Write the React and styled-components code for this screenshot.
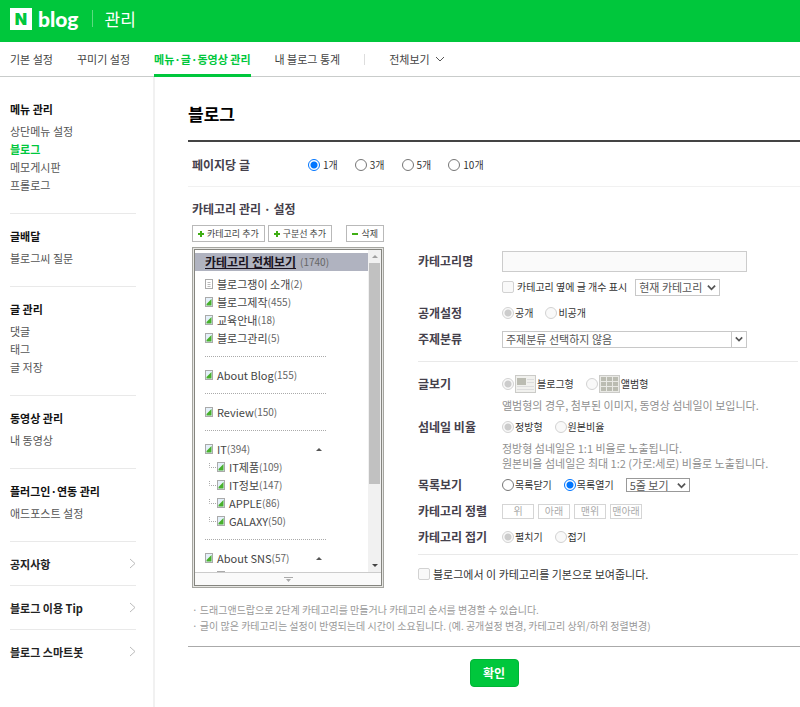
import { useState } from 'react'
import styled, { createGlobalStyle, css } from 'styled-components'

const root = {
    green: "#00c73c",
    ink: "#333",
    label: "#45404b",
    hint: "#8f8f8f",
    line: "#e9e9e9",
    fontSmall: "10px",
    font: "11px",
    fontBig: "12px",
    fontTitle: "17px"
}

const GlobalStyle = createGlobalStyle`
    * { box-sizing: border-box; }
    body {
        margin: 0;
        background: #fff;
        color: ${root.ink};
        font: ${root.font}/18px "Noto Sans CJK KR", sans-serif;
    }
    h1, h2, h3, ul, p, fieldset { margin: 0; padding: 0; border: 0; min-width: 0; }
    ul { list-style: none; }
    a { color: inherit; text-decoration: none; }
    button, input, select { margin: 0; font-family: inherit; color: inherit; }
    svg { display: block; flex: none; }
`

/* header */

const Header = styled.header`
    display: flex;
    align-items: center;
    height: 42px;
    padding: 0 10px 5px;
    background: ${root.green};
    color: #fff;
`

const Logo = styled.a`
    display: flex;
    align-items: center;
    gap: 6px;
`

const LogoMark = styled.span`
    width: 22px;
    height: 22px;
    background: #fff;
    color: ${root.green};
    font: 900 16px/22px Inter, sans-serif;
    text-align: center;
`

const LogoText = styled.span`
    font: 900 21px/22px Lato, sans-serif;
`

const HeaderTitle = styled.span`
    margin-left: 13px;
    padding-left: 12px;
    border-left: 1px solid #5bdb80;
    font-size: ${root.fontTitle};
    line-height: 17px;
`

const Nav = styled.nav`
    display: flex;
    gap: 24px;
    height: 35px;
    padding: 0 10px;
    border-bottom: 1px solid #c9cccb;
`

const NavLink = styled.a`
    display: flex;
    align-items: center;
    gap: 5px;
    height: 35px;
    padding-bottom: 2px;
    white-space: nowrap;
    color: #444;
    ${p => p.$active && css`
        color: ${root.green};
        font-weight: 700;
        box-shadow: inset 0 -3px ${root.green};
    `}
`

const NavBar = styled.span`
    align-self: center;
    width: 1px;
    height: 11px;
    background: #ddd;
`

/* side menu */

const Page = styled.div`
    display: grid;
    grid-template-columns: 155px 1fr;
`

const Side = styled.aside`
    min-height: calc(100vh - 77px);
    padding: 10px 17px 0 10px;
    border-right: 2px solid #f1f1f1;
`

const SideGroup = styled.section`
    padding: 11px 0 19px;
    & + & { border-top: 1px solid ${root.line}; }
`

const SideTitle = styled.h2`
    margin-bottom: 2px;
    font-size: ${root.font};
    line-height: 22px;
    color: #111;
`

const SideLink = styled.a`
    display: block;
    color: ${p => p.$active ? root.green : "#555"};
    font-weight: ${p => p.$active ? 700 : 400};
`

const SideMore = styled.a`
    display: flex;
    align-items: center;
    justify-content: space-between;
    height: 44px;
    border-top: 1px solid ${root.line};
    font-weight: 700;
    color: #222;
`

/* main */

const Main = styled.main`
    padding: 24px 0 20px 33px;
`

const Title = styled.h1`
    padding: 0 0 13px;
    border-bottom: 2px solid #444;
    font-size: ${root.fontTitle};
    line-height: 26px;
    color: #000;
`

const PerPage = styled.fieldset`
    display: flex;
    align-items: center;
    gap: 17px;
    height: 45px;
    padding: 2px 0 0 4px;
    border-bottom: 1px solid #f1f1f1;
`

const Label = styled.span`
    font-size: ${root.fontBig};
    font-weight: 700;
    line-height: 24px;
    color: ${root.label};
`

const PerPageLabel = styled(Label)`
    width: 99px;
`

const Choice = styled.label`
    display: flex;
    align-items: center;
    gap: ${p => p.$loose ? "3px" : "1px"};
    font-size: ${root.fontSmall};
    white-space: nowrap;
`

const Radio = styled.input.attrs({ type: "radio" })`
    appearance: none;
    width: 12px;
    height: 12px;
    border: 1px solid #767676;
    border-radius: 50%;
    background: #fff;
    &:checked {
        border-color: #0075ff;
        background: radial-gradient(circle, #0075ff 3px, #fff 4px);
    }
    &:disabled { border-color: #d2d2d2; background: #f9f9f9; }
    &:disabled:checked { background: radial-gradient(circle, #ccc 3px, #f9f9f9 4px); }
`

const Check = styled.input.attrs({ type: "checkbox" })`
    appearance: none;
    width: 12px;
    height: 12px;
    border: 1px solid #d2d2d2;
    border-radius: 2px;
    background: #f9f9f9;
`

const Columns = styled.div`
    display: grid;
    grid-template-columns: 192px 1fr;
    gap: 34px;
    padding: 10px 2px 0 4px;
`

const Tools = styled.div`
    display: flex;
    gap: 3px;
    margin: 4px 0 5px;
    button:last-child { margin-left: auto; }
`

const ToolButton = styled.button`
    display: flex;
    align-items: center;
    gap: 3px;
    height: 17px;
    padding: 0 5px;
    border: 1px solid #b9b9b9;
    background: #fff;
    color: #444;
    font-size: 9px;
    line-height: 15px;
    white-space: nowrap;
`

const TreeBox = styled.div`
    padding: 1px;
    border: 1px solid #a5a5a0;
    background: #e6e6e3;
`

const TreeInner = styled.div`
    border: 1px solid #85857f;
    background: #fff;
`

const TreeView = styled.div`
    display: grid;
    grid-template-columns: 1fr 13px;
    height: 322px;
`

const TreeList = styled.div`
    padding-top: 3px;
    overflow: hidden;
`

const TreeHead = styled.div`
    display: flex;
    align-items: center;
    gap: 4px;
    height: 18px;
    margin-bottom: 4px;
    padding-left: 10px;
    background: #b0b3c0;
    font-size: ${root.fontBig};
    strong { color: #1a1320; text-decoration: underline; }
`

const Count = styled.span`
    color: #666;
    font-size: ${root.fontSmall};
`

const TreeRow = styled.li`
    display: flex;
    align-items: center;
    width: 130px;
    height: 18px;
    padding-left: ${p => p.$child ? "14px" : "10px"};
    color: #444;
    white-space: nowrap;
    > svg:first-child { margin-right: ${p => p.$child ? "1px" : "4px"}; }
    > svg + svg { margin-right: 4px; }
`

const TreeToggle = styled.button`
    margin-left: auto;
    padding: 3px;
    border: 0;
    background: none;
`

const TreeLine = styled.li`
    display: flex;
    align-items: center;
    height: 19px;
    margin-left: 10px;
    &::after {
        content: "";
        width: 121px;
        border-top: 1px dotted #aaa;
    }
`

const ScrollBar = styled.div`
    display: flex;
    flex-direction: column;
    align-items: center;
    justify-content: space-between;
    padding: 5px 0;
    background: #f1f1f1;
`

const ScrollThumb = styled.div`
    width: 11px;
    height: 221px;
    margin: 5px 0 auto;
    background: #c1c1c1;
`

const TreeFoot = styled.button`
    display: flex;
    align-items: center;
    justify-content: center;
    width: 100%;
    height: 13px;
    padding: 0;
    border: 0;
    border-top: 1px solid #ccc;
    background: #fafafa;
`

/* form */

const Form = styled.div`
    padding-top: 52px;
`

const Section = styled.div`
    display: grid;
    gap: 2px;
    padding: ${p => p.$first ? "0 0 10px" : "10px 0 5px"};
    border-bottom: 1px solid ${root.line};
`

const Row = styled.div`
    display: grid;
    grid-template-columns: 84px 1fr;
`

const Field = styled.div`
    display: grid;
    gap: 2px;
`

const Line = styled.div`
    display: flex;
    align-items: center;
    gap: ${p => p.$gap || "12px"};
    height: 24px;
`

const Hint = styled.p`
    color: ${root.hint};
    line-height: 15px;
`

const NameInput = styled.input`
    width: 245px;
    height: 21px;
    border: 1px solid #ccc;
    background: #fafafa;
`

const SelectWrap = styled.span`
    display: grid;
    grid-template-columns: 1fr 15px;
    align-items: center;
    width: ${p => p.$width};
    height: ${p => p.$slim ? "14px" : "17px"};
    border: 1px solid ${p => p.$dark ? "#999" : "#c8c8c8"};
    background: #fff;
    color: #555;
    select {
        grid-area: 1 / 1 / 2 / 3;
        appearance: none;
        width: 100%;
        height: 100%;
        padding: 0 3px;
        border: 0;
        background: none;
        font-size: ${root.font};
        line-height: 12px;
        opacity: 1;
    }
`

const SelectMark = styled.span`
    grid-area: 1 / 2;
    display: grid;
    place-items: center;
    height: 100%;
    pointer-events: none;
    border-left: ${p => p.$split ? "1px solid #c8c8c8" : "0"};
`

const OrderButton = styled.button`
    width: 32px;
    height: 15px;
    padding: 0;
    border: 1px solid #d5d5d5;
    background: #fff;
    font-size: ${root.fontSmall};
    line-height: 12px;
    &:disabled { color: #aaa; }
`

const Default = styled.label`
    display: flex;
    align-items: center;
    gap: 3px;
    height: 38px;
`

const Notes = styled.ul`
    padding: 9px 4px 12px;
    border-bottom: 1px solid #aaa;
    color: #999;
    font-size: ${root.fontSmall};
    line-height: 16px;
`

const Submit = styled.button`
    display: block;
    width: 49px;
    height: 28px;
    margin: 12px auto 0;
    padding: 0;
    border: 1px solid #00b436;
    border-radius: 4px;
    background: ${root.green};
    color: #fff;
    font-size: ${root.fontBig};
    font-weight: 700;
    line-height: 26px;
`

/* icons */

const ChevronDown = ({ size = 10, color = "#555", weight = 1 }) =>
    <svg width={size} height={size} viewBox="0 0 10 10" fill="none" stroke={color} strokeWidth={weight}>
        <path d="M1 3l4 4 4-4" />
    </svg>

const ChevronRight = () =>
    <svg width="7" height="11" viewBox="0 0 7 11" fill="none" stroke="#bbb">
        <path d="M1 1l5 4.5L1 10" />
    </svg>

const Sign = ({ minus }) =>
    <svg width="6" height="6" viewBox="0 0 6 6" stroke="#3fae14" strokeWidth="2">
        <path d={minus ? "M0 3h6" : "M0 3h6M3 0v6"} />
    </svg>

const Triangle = ({ up, color = "#555" }) =>
    <svg width="6" height="3" viewBox="0 0 6 3" fill={color}>
        <path d={up ? "M0 3l3-3 3 3z" : "M0 0l3 3 3-3z"} />
    </svg>

const Expand = () =>
    <svg width="9" height="5" viewBox="0 0 9 5" fill="#aaa">
        <path d="M0 0h9v1H0zM2 2h5L4.500 5z" />
    </svg>

const FileIcon = ({ text }) =>
    <svg width="8" height="10" viewBox="0 0 8 10">
        <rect x=".5" y=".5" width="7" height="9" fill={text ? "#fff" : "#e4f0fa"} stroke="#aaa" />
        {text
            ? <path d="M2.500 3.500h3M2.500 5.500h3M2.500 7.500h3" stroke="#bbb" />
            : <path d="M1.500 8.500V7l5-5v6.500z" fill="#48b02c" />}
    </svg>

const Branch = () =>
    <svg width="7" height="8" viewBox="0 0 7 8" fill="none" stroke="#aaa" strokeDasharray="1 1">
        <path d="M.5 0v4.500H7" />
    </svg>

const BlogView = () =>
    <svg width="21" height="18" viewBox="0 0 21 18">
        <rect x=".5" y=".5" width="20" height="17" fill="#f1f1ee" stroke="#cbcbc8" />
        <path d="M12 4.500h7M12 7.500h7M2 11.500h17M2 14.500h17" stroke="#ddd" />
        <path d="M2 3h9v7H2z" fill="#bbbcb2" />
    </svg>

const AlbumView = () =>
    <svg width="21" height="18" viewBox="0 0 21 18">
        <rect x=".5" y=".5" width="20" height="17" fill="#e9e9e5" stroke="#cbcbc8" />
        <path d="M2 2h5v4H2zM8 2h5v4H8zM14 2h5v4h-5zM2 7h5v4H2zM8 7h5v4H8zM14 7h5v4h-5zM2 12h5v4H2zM8 12h5v4H8zM14 12h5v4h-5z" fill="#bbbcb2" />
    </svg>

const sideGroups = [
    { title: "메뉴 관리", links: ["상단메뉴 설정", "블로그", "메모게시판", "프롤로그"] },
    { title: "글배달", links: ["블로그씨 질문"] },
    { title: "글 관리", links: ["댓글", "태그", "글 저장"] },
    { title: "동영상 관리", links: ["내 동영상"] },
    { title: "플러그인·연동 관리", links: ["애드포스트 설정"] }
]

const sideMore = ["공지사항", "블로그 이용 Tip", "블로그 스마트봇"]

const tree = [
    { name: "블로그쟁이 소개", count: 2, text: true },
    { name: "블로그제작", count: 455 },
    { name: "교육안내", count: 18 },
    { name: "블로그관리", count: 5 },
    null,
    { name: "About Blog", count: 155 },
    null,
    { name: "Review", count: 150 },
    null,
    { name: "IT", count: 394, open: true },
    { name: "IT제품", count: 109, child: true },
    { name: "IT정보", count: 147, child: true },
    { name: "APPLE", count: 86, child: true },
    { name: "GALAXY", count: 50, child: true },
    null,
    { name: "About SNS", count: 57, open: true },
    { child: true }
]

function Select({ label, value, split, disabled, ...rest }) {
    return <SelectWrap {...rest}>
        <select aria-label={label} disabled={disabled}><option>{value}</option></select>
        <SelectMark $split={split}><ChevronDown size={split ? 8 : 9} weight={2} /></SelectMark>
    </SelectWrap>
}

function CategoryTree() {
    return <TreeBox>
        <TreeInner>
            <TreeView>
                <TreeList>
                    <TreeHead><strong>카테고리 전체보기</strong><Count>(1740)</Count></TreeHead>
                    <ul>
                        {tree.map((item, i) => item
                            ? <TreeRow key={i} $child={item.child}>
                                {item.child && <Branch />}
                                <FileIcon text={item.text} />
                                {item.name}
                                {item.count && <Count>({item.count})</Count>}
                                {item.open && <TreeToggle aria-label="접기"><Triangle up /></TreeToggle>}
                            </TreeRow>
                            : <TreeLine key={i} />)}
                    </ul>
                </TreeList>
                <ScrollBar>
                    <Triangle up color="#a0a0a0" />
                    <ScrollThumb />
                    <Triangle color="#444" />
                </ScrollBar>
            </TreeView>
            <TreeFoot aria-label="목록 늘리기"><Expand /></TreeFoot>
        </TreeInner>
    </TreeBox>
}

function Settings() {
    const [list, setList] = useState("open")

    return <Form>
        <Section $first>
            <Row>
                <Label as="label" htmlFor="name">카테고리명</Label>
                <Field>
                    <Line><NameInput id="name" disabled /></Line>
                    <Line $gap="8px">
                        <Choice $loose><Check disabled />카테고리 옆에 글 개수 표시</Choice>
                        <Select label="글 개수" value="현재 카테고리" $width="85px" disabled />
                    </Line>
                </Field>
            </Row>
            <Row>
                <Label>공개설정</Label>
                <Line>
                    <Choice><Radio name="public" defaultChecked disabled />공개</Choice>
                    <Choice><Radio name="public" disabled />비공개</Choice>
                </Line>
            </Row>
            <Row>
                <Label>주제분류</Label>
                <Line><Select label="주제분류" value="주제분류 선택하지 않음" $width="245px" split disabled /></Line>
            </Row>
        </Section>
        <Section>
            <Row>
                <Label>글보기</Label>
                <Field>
                    <Line>
                        <Choice><Radio name="view" defaultChecked disabled /><BlogView />블로그형</Choice>
                        <Choice><Radio name="view" disabled /><AlbumView />앨범형</Choice>
                    </Line>
                    <Hint>앨범형의 경우, 첨부된 이미지, 동영상 섬네일이 보입니다.</Hint>
                </Field>
            </Row>
            <Row>
                <Label>섬네일 비율</Label>
                <Field>
                    <Line>
                        <Choice><Radio name="ratio" defaultChecked disabled />정방형</Choice>
                        <Choice><Radio name="ratio" disabled />원본비율</Choice>
                    </Line>
                    <Hint>정방형 섬네일은 1:1 비율로 노출됩니다.<br />원본비율 섬네일은 최대 1:2 (가로:세로) 비율로 노출됩니다.</Hint>
                </Field>
            </Row>
            <Row>
                <Label>목록보기</Label>
                <Line>
                    <Choice><Radio name="list" checked={list === "close"} onChange={() => { setList("close") }} />목록닫기</Choice>
                    <Choice><Radio name="list" checked={list === "open"} onChange={() => { setList("open") }} />목록열기</Choice>
                    <Select label="줄 수" value="5줄 보기" $width="64px" $slim $dark />
                </Line>
            </Row>
            <Row>
                <Label>카테고리 정렬</Label>
                <Line $gap="4px">
                    {["위", "아래", "맨위", "맨아래"].map(name => <OrderButton key={name} disabled>{name}</OrderButton>)}
                </Line>
            </Row>
            <Row>
                <Label>카테고리 접기</Label>
                <Line>
                    <Choice><Radio name="fold" defaultChecked disabled />펼치기</Choice>
                    <Choice><Radio name="fold" disabled />접기</Choice>
                </Line>
            </Row>
        </Section>
        <Default><Check disabled />블로그에서 이 카테고리를 기본으로 보여줍니다.</Default>
    </Form>
}

export default function App() {
    const [perPage, setPerPage] = useState(1)

    return <>
        <GlobalStyle />
        <Header>
            <Logo href="#"><LogoMark>N</LogoMark><LogoText>blog</LogoText></Logo>
            <HeaderTitle>관리</HeaderTitle>
        </Header>
        <Nav>
            <NavLink href="#">기본 설정</NavLink>
            <NavLink href="#">꾸미기 설정</NavLink>
            <NavLink href="#" $active>메뉴·글·동영상 관리</NavLink>
            <NavLink href="#">내 블로그 통계</NavLink>
            <NavBar />
            <NavLink href="#">전체보기<ChevronDown /></NavLink>
        </Nav>
        <Page>
            <Side>
                {sideGroups.map(group => <SideGroup key={group.title}>
                    <SideTitle>{group.title}</SideTitle>
                    <ul>
                        {group.links.map(link => <li key={link}><SideLink href="#" $active={link === "블로그"}>{link}</SideLink></li>)}
                    </ul>
                </SideGroup>)}
                {sideMore.map(link => <SideMore key={link} href="#">{link}<ChevronRight /></SideMore>)}
            </Side>
            <Main>
                <Title>블로그</Title>
                <PerPage>
                    <PerPageLabel>페이지당 글</PerPageLabel>
                    {[1, 3, 5, 10].map(n => <Choice key={n} $loose>
                        <Radio name="perPage" checked={perPage === n} onChange={() => { setPerPage(n) }} />{n}개
                    </Choice>)}
                </PerPage>
                <Columns>
                    <div>
                        <Label as="h3">카테고리 관리 · 설정</Label>
                        <Tools>
                            <ToolButton><Sign />카테고리 추가</ToolButton>
                            <ToolButton><Sign />구분선 추가</ToolButton>
                            <ToolButton><Sign minus />삭제</ToolButton>
                        </Tools>
                        <CategoryTree />
                    </div>
                    <Settings />
                </Columns>
                <Notes>
                    <li>· 드래그앤드랍으로 2단계 카테고리를 만들거나 카테고리 순서를 변경할 수 있습니다.</li>
                    <li>· 글이 많은 카테고리는 설정이 반영되는데 시간이 소요됩니다. (예. 공개설정 변경, 카테고리 상위/하위 정렬변경)</li>
                </Notes>
                <Submit>확인</Submit>
            </Main>
        </Page>
    </>
}
